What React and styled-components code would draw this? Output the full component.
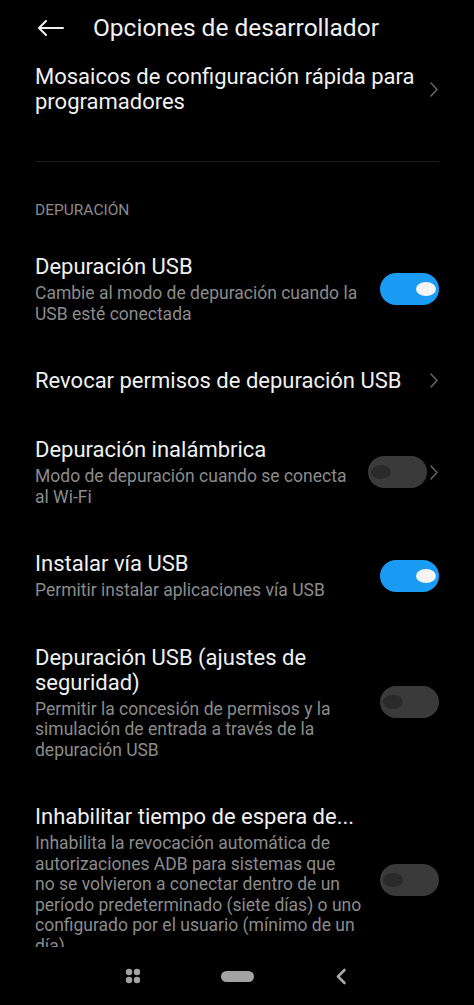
import React from "react";
import styled, { createGlobalStyle } from "styled-components";

const Global = createGlobalStyle`
  html, body { margin: 0; padding: 0; background: #000; }
  body { font-family: Roboto, "Noto Sans", "Liberation Sans", sans-serif; -webkit-font-smoothing: antialiased; }
  * { box-sizing: border-box; }
`;

const Screen = styled.div`
  width: 474px;
  height: 1005px;
  background: #000;
  display: flex;
  flex-direction: column;
  overflow: hidden;
`;

const Header = styled.header`
  height: 56px;
  flex: none;
  display: flex;
  align-items: center;
  padding: 0 0 0 37px;
  gap: 29px;
`;

const HeaderTitle = styled.h1`
  margin: 0;
  font-size: 24.5px;
  font-weight: 400;
  color: #f0f0f0;
  line-height: 28px;
  white-space: nowrap;
`;

const Content = styled.main`
  flex: 1;
  overflow: hidden;
`;

const Row = styled.div`
  display: flex;
  align-items: center;
  padding: ${(p) => p.$pad || "22px 35px"};
  gap: 15px;
`;

const TextBlock = styled.div`
  flex: 1;
  min-width: 0;
`;

const Title = styled.div`
  font-size: 22px;
  line-height: 25px;
  color: #f0f0f0;
  ${(p) => p.$nowrap && `white-space: nowrap; overflow: hidden;`}
`;

const Subtitle = styled.div`
  margin-top: 4px;
  font-size: 17.5px;
  line-height: 20.5px;
  color: #8b8b8b;
`;

const Divider = styled.hr`
  margin: 25px 35px 0;
  border: none;
  height: 1px;
  background: #1f1f1f;
`;

const SectionHeader = styled.div`
  margin: 38px 35px 12px;
  font-size: 15.5px;
  line-height: 20px;
  color: #8a8a8a;
`;

const Controls = styled.div`
  display: flex;
  align-items: center;
  gap: 3px;
  flex: none;
`;

const Track = styled.div`
  width: 59px;
  height: 32px;
  border-radius: 16px;
  background: ${(p) => (p.$on ? "#1a9cf5" : "#3a3a3a")};
  display: flex;
  align-items: center;
  justify-content: ${(p) => (p.$on ? "flex-end" : "flex-start")};
  padding: 0 3px;
  flex: none;
`;

const Knob = styled.div`
  width: 20px;
  height: 14px;
  border-radius: 50%;
  background: ${(p) => (p.$on ? "#f4f4f4" : "#2a2a2a")};
`;

const NavBar = styled.nav`
  height: 58px;
  flex: none;
  display: flex;
  align-items: center;
  justify-content: center;
  background: #000;
`;

const NavSlot = styled.div`
  width: 104px;
  display: flex;
  justify-content: center;
  align-items: center;
`;

const HomePill = styled.div`
  width: 33px;
  height: 11px;
  border-radius: 6px;
  background: #a3a3a3;
`;

const Chevron = () => (
  <svg width="8" height="15" viewBox="0 0 8 15" style={{ display: "block", flex: "none" }}>
    <path d="M1 1 L7 7.5 L1 14" fill="none" stroke="#6a6a6a" strokeWidth="1.4" strokeLinecap="round" strokeLinejoin="round" />
  </svg>
);

const Switch = ({ on }) => (
  <Track $on={on}>
    <Knob $on={on} />
  </Track>
);

const BackArrow = () => (
  <svg width="27" height="16" viewBox="0 0 27 16" style={{ display: "block" }}>
    <path d="M26 8 H2 M9 1 L2 8 L9 15" fill="none" stroke="#f0f0f0" strokeWidth="2" strokeLinecap="round" strokeLinejoin="round" />
  </svg>
);

const RecentsIcon = () => (
  <svg width="16" height="16" viewBox="0 0 16 16" style={{ display: "block" }}>
    <circle cx="4" cy="4" r="3.2" fill="#a3a3a3" />
    <circle cx="12" cy="4" r="3.2" fill="#a3a3a3" />
    <circle cx="4" cy="12" r="3.2" fill="#a3a3a3" />
    <circle cx="12" cy="12" r="3.2" fill="#a3a3a3" />
  </svg>
);

const NavBack = () => (
  <svg width="12" height="17" viewBox="0 0 12 17" style={{ display: "block" }}>
    <path d="M9.5 2 L3 8.5 L9.5 15" fill="none" stroke="#a8a8a8" strokeWidth="2.6" strokeLinecap="round" strokeLinejoin="round" />
  </svg>
);

export default function App() {
  return (
    <>
      <Global />
      <Screen>
        <Header>
          <BackArrow />
          <HeaderTitle>Opciones de desarrollador</HeaderTitle>
        </Header>
        <Content>
          <Row $pad="8px 36px 22px 35px">
            <TextBlock>
              <Title>Mosaicos de configuración rápida para programadores</Title>
            </TextBlock>
            <Chevron />
          </Row>
          <Divider />
          <SectionHeader>DEPURACIÓN</SectionHeader>

          <Row>
            <TextBlock>
              <Title>Depuración USB</Title>
              <Subtitle>Cambie al modo de depuración cuando la USB esté conectada</Subtitle>
            </TextBlock>
            <Switch on />
          </Row>

          <Row $pad="22px 36px 22px 35px">
            <TextBlock>
              <Title>Revocar permisos de depuración USB</Title>
            </TextBlock>
            <Chevron />
          </Row>

          <Row $pad="22px 36px 22px 35px">
            <TextBlock>
              <Title>Depuración inalámbrica</Title>
              <Subtitle>Modo de depuración cuando se conecta al Wi-Fi</Subtitle>
            </TextBlock>
            <Controls>
              <Switch on={false} />
              <Chevron />
            </Controls>
          </Row>

          <Row>
            <TextBlock>
              <Title>Instalar vía USB</Title>
              <Subtitle>Permitir instalar aplicaciones vía USB</Subtitle>
            </TextBlock>
            <Switch on />
          </Row>

          <Row>
            <TextBlock>
              <Title>Depuración USB (ajustes de seguridad)</Title>
              <Subtitle>Permitir la concesión de permisos y la simulación de entrada a través de la depuración USB</Subtitle>
            </TextBlock>
            <Switch on={false} />
          </Row>

          <Row>
            <TextBlock>
              <Title $nowrap>Inhabilitar tiempo de espera de...</Title>
              <Subtitle>
                Inhabilita la revocación automática de autorizaciones ADB para sistemas que
                <br />
                no se volvieron a conectar dentro de un período predeterminado (siete días) o uno configurado por el usuario (mínimo de un día)
              </Subtitle>
            </TextBlock>
            <Switch on={false} />
          </Row>
        </Content>
        <NavBar>
          <NavSlot><RecentsIcon /></NavSlot>
          <NavSlot><HomePill /></NavSlot>
          <NavSlot><NavBack /></NavSlot>
        </NavBar>
      </Screen>
    </>
  );
}
